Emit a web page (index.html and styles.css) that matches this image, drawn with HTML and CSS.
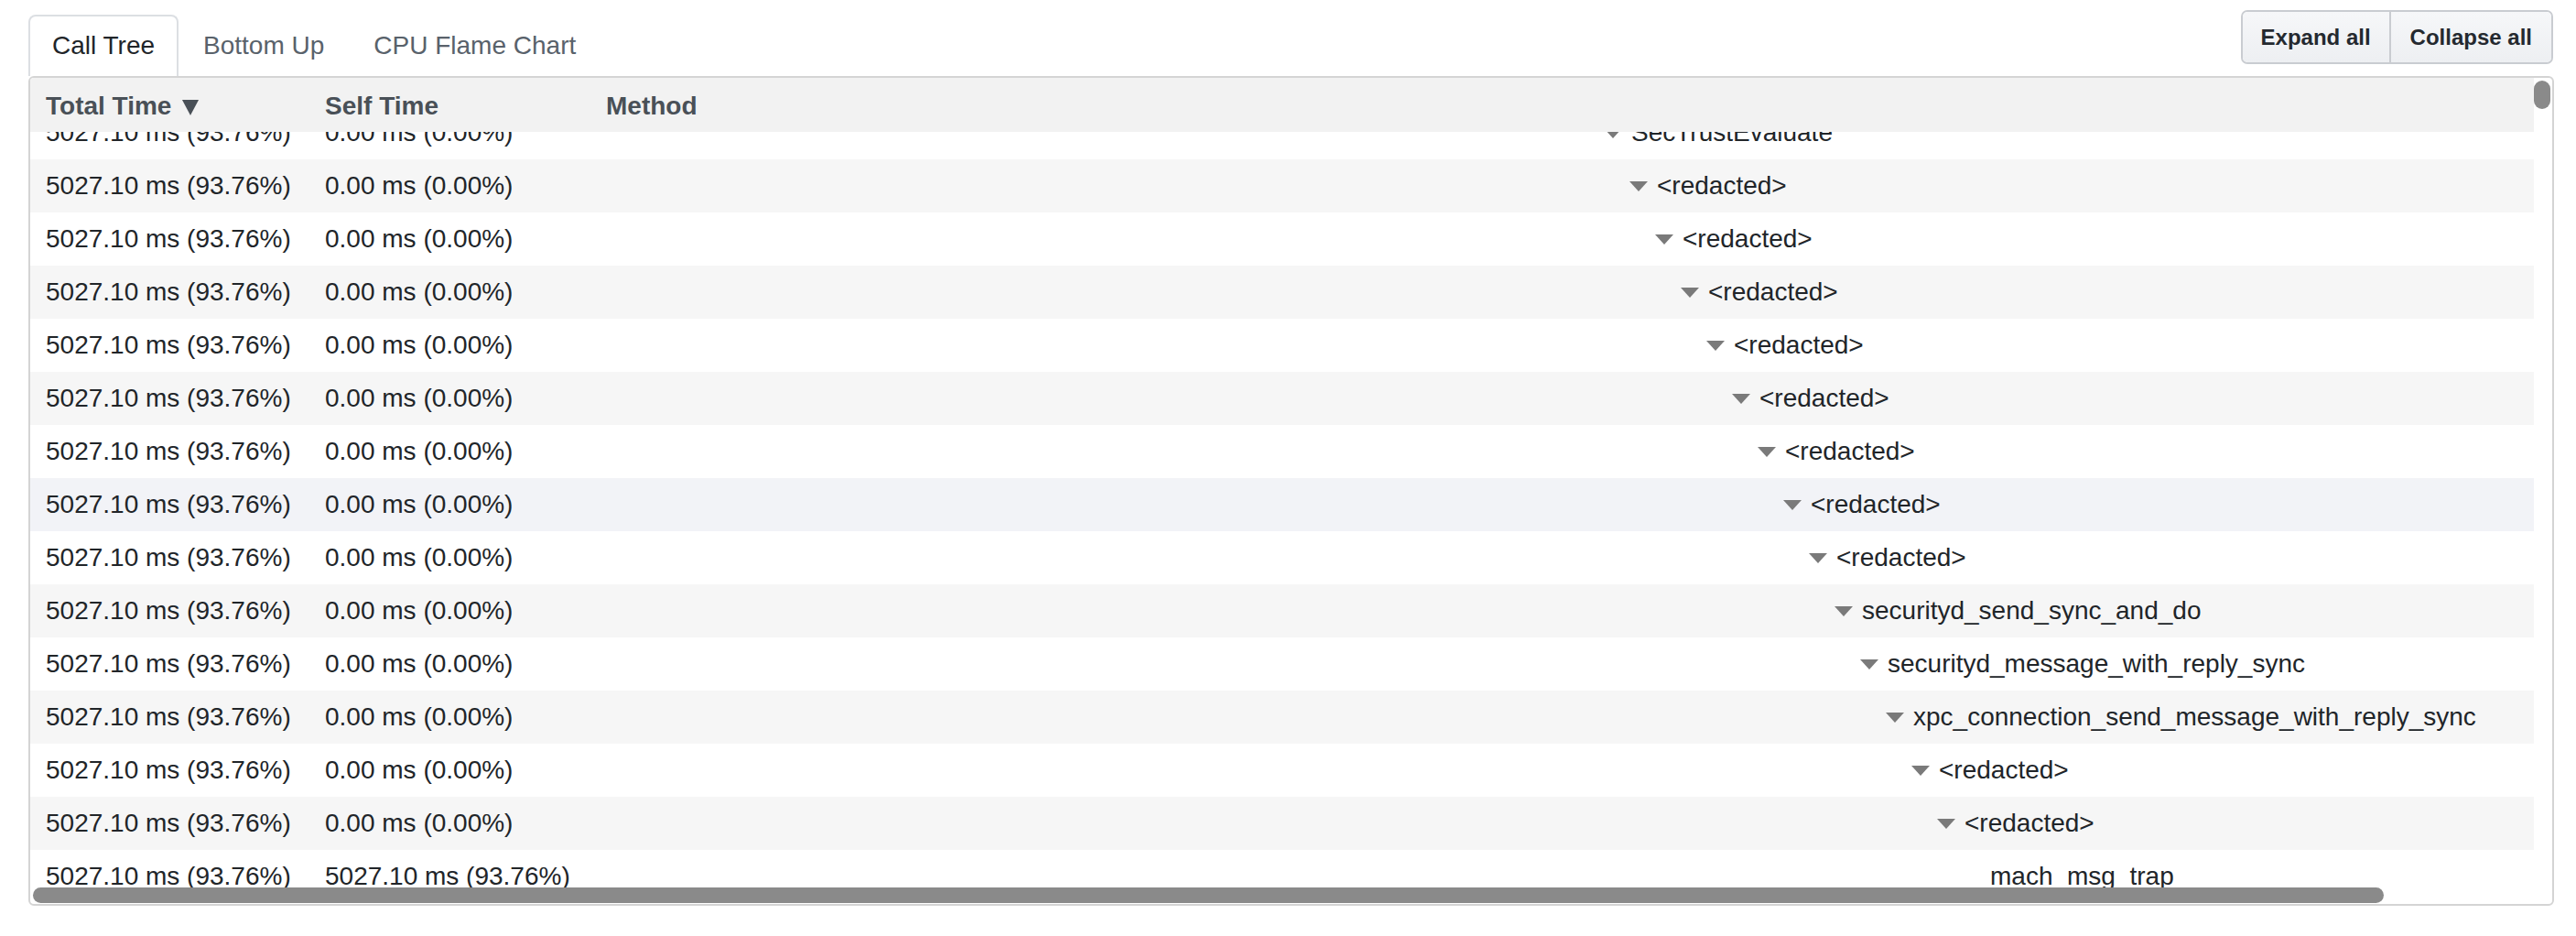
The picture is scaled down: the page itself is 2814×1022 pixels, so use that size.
FILE: index.html
```html
<!DOCTYPE html>
<html lang="en">
<head>
<meta charset="utf-8">
<title>Call Tree</title>
<link rel="stylesheet" href="styles.css">
</head>
<body>
<div class="toolbar">
  <nav class="tabs">
    <a class="tab active">Call Tree</a>
    <a class="tab">Bottom Up</a>
    <a class="tab">CPU Flame Chart</a>
  </nav>
  <div class="btn-group">
    <button class="btn">Expand all</button>
    <button class="btn">Collapse all</button>
  </div>
</div>
<div class="panel">
  <div class="viewport">
    <div class="head">
      <div class="cell">Total Time <svg class="sort" width="18" height="17" viewBox="0 0 18 17"><polygon points="0,0 18,0 9,17" fill="#495057"/></svg></div>
      <div class="cell">Self Time</div>
      <div class="cell">Method</div>
    </div>
    <div class="rows">
      <div class="row"><div class="cell">5027.10 ms (93.76%)</div><div class="cell">0.00 ms (0.00%)</div><div class="cell node" style="--d:39"><span class="caret"></span>SecTrustEvaluate</div></div>
      <div class="row"><div class="cell">5027.10 ms (93.76%)</div><div class="cell">0.00 ms (0.00%)</div><div class="cell node" style="--d:40"><span class="caret"></span>&lt;redacted&gt;</div></div>
      <div class="row"><div class="cell">5027.10 ms (93.76%)</div><div class="cell">0.00 ms (0.00%)</div><div class="cell node" style="--d:41"><span class="caret"></span>&lt;redacted&gt;</div></div>
      <div class="row"><div class="cell">5027.10 ms (93.76%)</div><div class="cell">0.00 ms (0.00%)</div><div class="cell node" style="--d:42"><span class="caret"></span>&lt;redacted&gt;</div></div>
      <div class="row"><div class="cell">5027.10 ms (93.76%)</div><div class="cell">0.00 ms (0.00%)</div><div class="cell node" style="--d:43"><span class="caret"></span>&lt;redacted&gt;</div></div>
      <div class="row"><div class="cell">5027.10 ms (93.76%)</div><div class="cell">0.00 ms (0.00%)</div><div class="cell node" style="--d:44"><span class="caret"></span>&lt;redacted&gt;</div></div>
      <div class="row"><div class="cell">5027.10 ms (93.76%)</div><div class="cell">0.00 ms (0.00%)</div><div class="cell node" style="--d:45"><span class="caret"></span>&lt;redacted&gt;</div></div>
      <div class="row hover"><div class="cell">5027.10 ms (93.76%)</div><div class="cell">0.00 ms (0.00%)</div><div class="cell node" style="--d:46"><span class="caret"></span>&lt;redacted&gt;</div></div>
      <div class="row"><div class="cell">5027.10 ms (93.76%)</div><div class="cell">0.00 ms (0.00%)</div><div class="cell node" style="--d:47"><span class="caret"></span>&lt;redacted&gt;</div></div>
      <div class="row"><div class="cell">5027.10 ms (93.76%)</div><div class="cell">0.00 ms (0.00%)</div><div class="cell node" style="--d:48"><span class="caret"></span>securityd_send_sync_and_do</div></div>
      <div class="row"><div class="cell">5027.10 ms (93.76%)</div><div class="cell">0.00 ms (0.00%)</div><div class="cell node" style="--d:49"><span class="caret"></span>securityd_message_with_reply_sync</div></div>
      <div class="row"><div class="cell">5027.10 ms (93.76%)</div><div class="cell">0.00 ms (0.00%)</div><div class="cell node" style="--d:50"><span class="caret"></span>xpc_connection_send_message_with_reply_sync</div></div>
      <div class="row"><div class="cell">5027.10 ms (93.76%)</div><div class="cell">0.00 ms (0.00%)</div><div class="cell node" style="--d:51"><span class="caret"></span>&lt;redacted&gt;</div></div>
      <div class="row"><div class="cell">5027.10 ms (93.76%)</div><div class="cell">0.00 ms (0.00%)</div><div class="cell node" style="--d:52"><span class="caret"></span>&lt;redacted&gt;</div></div>
      <div class="row"><div class="cell">5027.10 ms (93.76%)</div><div class="cell">5027.10 ms (93.76%)</div><div class="cell node" style="--d:53"><span class="caret leaf"></span>mach_msg_trap</div></div>
    </div>
  </div>
  <div class="vthumb"></div>
  <div class="hthumb"></div>
</div>
</body>
</html>
```

FILE: styles.css
```css
* { box-sizing: border-box; }

html, body {
  margin: 0;
  padding: 0;
  background: #ffffff;
}

body {
  font-family: "Liberation Sans", Arial, sans-serif;
  font-size: 28px;
  color: #212529;
  width: 2814px;
  height: 1022px;
  overflow: hidden;
}

.toolbar {
  display: flex;
  justify-content: space-between;
  align-items: flex-start;
  height: 83px;
  margin: 0 25px 0 31px;
}

.tabs {
  display: flex;
  margin-top: 16px;
}

.tab {
  display: block;
  height: 67px;
  padding: 15px 25px 17px;
  line-height: 33px;
  border: 2px solid transparent;
  border-bottom: none;
  border-radius: 8px 8px 0 0;
  color: #59626b;
  white-space: nowrap;
}

.tab.active {
  color: #212529;
  border-color: #dcdfe3;
  background: #ffffff;
  padding-left: 24px;
  padding-right: 24px;
}

.btn-group {
  display: flex;
  margin-top: 11px;
  height: 59px;
  border: 2px solid #c9ccd1;
  border-radius: 7px;
  overflow: hidden;
}

.btn {
  font-family: "Liberation Sans", Arial, sans-serif;
  font-size: 24px;
  font-weight: bold;
  color: #24292f;
  background: linear-gradient(#f6f7f9, #edeff2);
  border: none;
  padding: 0 20px;
  height: 55px;
  margin: 0;
}

.btn + .btn {
  border-left: 2px solid #c9ccd1;
  padding: 0 21px;
}

.panel {
  position: relative;
  margin: 0 24px 0 31px;
  height: 906px;
  border: 2px solid #d4d4d4;
  border-radius: 6px;
  overflow: hidden;
  padding-right: 20px;
}

.viewport {
  height: 100%;
  overflow: hidden;
}

.head,
.row {
  display: grid;
  grid-template-columns: 305px 307px 1fr;
  align-items: center;
}

.head {
  position: relative;
  z-index: 1;
  height: 59px;
  padding-top: 2px;
  background: #f2f2f2;
  font-weight: bold;
  color: #495057;
}

.cell {
  padding-left: 17px;
  white-space: nowrap;
}

.sort {
  vertical-align: -1px;
  margin-left: 4px;
}

.rows {
  margin-top: -28px;
}

.row {
  height: 58px;
  line-height: 58px;
}

.row:nth-child(even) {
  background: #f6f6f6;
}

.row.hover {
  background: #f2f3f7;
}

.node {
  display: flex;
  align-items: center;
  padding-left: calc(var(--d) * 28px + 15px);
}

.caret {
  display: inline-block;
  width: 0;
  height: 0;
  border-left: 10px solid transparent;
  border-right: 10px solid transparent;
  border-top: 11px solid #7a7a7a;
  margin-right: 10px;
  margin-top: 1px;
}

.caret.leaf {
  border-top-color: transparent;
}

.vthumb {
  position: absolute;
  top: 3px;
  right: 2px;
  width: 18px;
  height: 31px;
  border-radius: 9px;
  background: #8a8a8a;
}

.hthumb {
  position: absolute;
  left: 3px;
  bottom: 1px;
  width: 2568px;
  height: 17px;
  border-radius: 9px;
  background: #8a8a8a;
}
```
